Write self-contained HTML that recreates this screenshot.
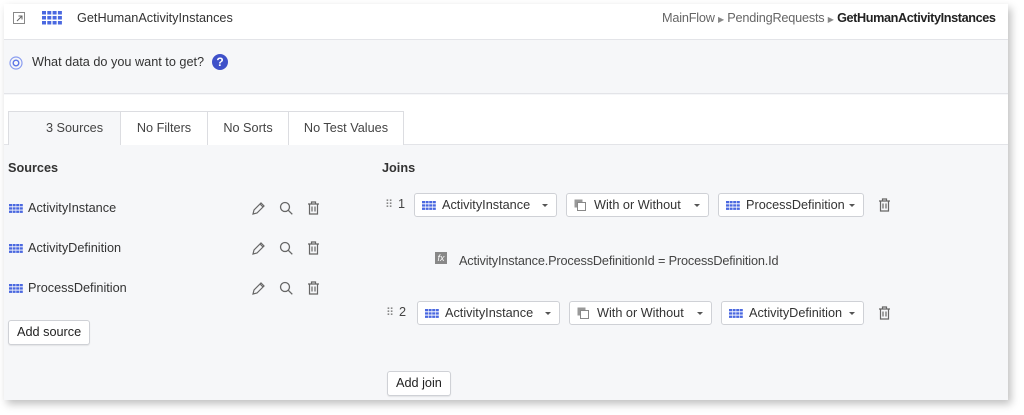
<!DOCTYPE html>
<html><head><meta charset="utf-8"><style>
*{box-sizing:border-box;margin:0;padding:0}
body{width:1024px;height:415px;background:#fff;font-family:"Liberation Sans",sans-serif;font-size:12.7px;color:#333;position:relative;overflow:hidden}
.panel{position:absolute;left:4px;top:4px;width:1004px;height:396px;background:#f6f7f9;box-shadow:3px 4px 8px rgba(0,0,0,.25);overflow:hidden}
.a{position:absolute;white-space:nowrap}
.hdr{position:absolute;left:0;top:0;width:1004px;height:36px;background:#fff;border-bottom:1px solid #e3e4e8}
.q{position:absolute;left:0;top:37px;width:1004px;height:53px;background:#f6f7f9;border-bottom:1px solid #e3e4e8}
.tabs{position:absolute;left:0;top:91px;width:1004px;height:50px;background:#fff;border-bottom:1px solid #e3e4e8}
.tab{position:absolute;top:16px;height:34px;border:1px solid #dcdde1;border-bottom:none;background:#fff;line-height:32px;text-align:center;color:#444}
.dd{position:absolute;height:24px;border:1px solid #cfd1d6;border-radius:3px;background:#fff;line-height:22px;color:#333}
.dd .c{position:absolute;right:8px;top:10px;width:0;height:0;border-left:3px solid transparent;border-right:3px solid transparent;border-top:3px solid #555}
.btn{position:absolute;height:25px;border:1px solid #cfd1d6;border-radius:3px;background:#fff;line-height:23px;padding:0 8px;color:#222;box-shadow:0 1px 1px rgba(0,0,0,.08)}
svg{position:absolute}
</style></head><body>
<svg width="0" height="0" style="position:absolute"><defs>
<g id="grid"><rect x="0" y="0" width="3" height="2.3" fill="#4a68e0"/><rect x="3.6" y="0" width="3" height="2.3" fill="#4a68e0"/><rect x="7.2" y="0" width="3" height="2.3" fill="#4a68e0"/><rect x="10.8" y="0" width="3" height="2.3" fill="#4a68e0"/>
<rect x="0" y="3.3" width="3" height="2.3" fill="#4a68e0"/><rect x="3.6" y="3.3" width="3" height="2.3" fill="#4a68e0"/><rect x="7.2" y="3.3" width="3" height="2.3" fill="#4a68e0"/><rect x="10.8" y="3.3" width="3" height="2.3" fill="#4a68e0"/>
<rect x="0" y="6.6" width="3" height="2.3" fill="#4a68e0"/><rect x="3.6" y="6.6" width="3" height="2.3" fill="#4a68e0"/><rect x="7.2" y="6.6" width="3" height="2.3" fill="#4a68e0"/><rect x="10.8" y="6.6" width="3" height="2.3" fill="#4a68e0"/></g>
<g id="big"><rect x="0" y="0" width="4" height="3.5" fill="#4a68e0"/><rect x="5.3" y="0" width="4" height="3.5" fill="#4a68e0"/><rect x="10.6" y="0" width="4" height="3.5" fill="#4a68e0"/><rect x="15.9" y="0" width="4" height="3.5" fill="#4a68e0"/>
<rect x="0" y="5" width="4" height="3.5" fill="#4a68e0"/><rect x="5.3" y="5" width="4" height="3.5" fill="#4a68e0"/><rect x="10.6" y="5" width="4" height="3.5" fill="#4a68e0"/><rect x="15.9" y="5" width="4" height="3.5" fill="#4a68e0"/>
<rect x="0" y="10" width="4" height="3.5" fill="#4a68e0"/><rect x="5.3" y="10" width="4" height="3.5" fill="#4a68e0"/><rect x="10.6" y="10" width="4" height="3.5" fill="#4a68e0"/><rect x="15.9" y="10" width="4" height="3.5" fill="#4a68e0"/></g>
<g id="trash" fill="none" stroke="#666" stroke-width="1.2"><path d="M1 3h11M4.5 3V1h4v2M2.5 3v10h8V3M5 5.5v5M8 5.5v5"/></g>
<g id="pen" fill="none" stroke="#666" stroke-width="1.2"><path d="M2 13l1-4 7-7 3 3-7 7z M9 3l3 3"/></g>
<g id="mag" fill="none" stroke="#666" stroke-width="1.3"><circle cx="6" cy="6" r="4.5"/><path d="M9.3 9.3l4 4"/></g>
</defs></svg>
<div class="panel">
 <div class="hdr">
  <div class="a" style="left:9px;top:8px;width:12px;height:12px;border:1px solid #888"></div>
  <svg style="left:12px;top:11px" width="7" height="7"><path d="M1 6L6 1M2.5 1H6v3.5" stroke="#666" fill="none"/></svg>
  <svg style="left:38px;top:7px" width="21" height="14"><use href="#big"/></svg>
  <div class="a" style="left:73px;top:7px;color:#333">GetHumanActivityInstances</div>
  <div class="a" style="left:658px;top:7px;color:#666;letter-spacing:-0.2px">MainFlow <span style="font-size:8px;color:#888">▶</span> PendingRequests <span style="font-size:8px;color:#888">▶</span> <span style="color:#222;font-weight:bold;letter-spacing:-0.4px">GetHumanActivityInstances</span></div>
 </div>
 <div class="q">
  <svg style="left:5px;top:15px" width="14" height="14"><circle cx="7" cy="7" r="6" fill="none" stroke="#8a9df0" stroke-width="1.2"/><circle cx="7" cy="7" r="2.8" fill="none" stroke="#5b74e6" stroke-width="1.4"/></svg>
  <div class="a" style="left:28px;top:14px;color:#333">What data do you want to get?</div>
  <div class="a" style="left:208px;top:13px;width:16px;height:16px;border-radius:50%;background:#3f51c9;color:#fff;font-weight:bold;font-size:12px;text-align:center;line-height:16px">?</div>
 </div>
 <div class="tabs">
  <div class="tab" style="left:4px;width:113px;background:#f6f7f9;padding-left:20px">3 Sources</div>
  <div class="tab" style="left:116px;width:88px">No Filters</div>
  <div class="tab" style="left:203px;width:82px">No Sorts</div>
  <div class="tab" style="left:284px;width:116px">No Test Values</div>
 </div>
 <div class="a" style="left:4px;top:157px;font-weight:bold;color:#333">Sources</div>
 <div class="a" style="left:378px;top:157px;font-weight:bold;color:#333">Joins</div>

 <svg style="left:5px;top:200px" width="14" height="10"><use href="#grid"/></svg>
 <div class="a" style="left:24px;top:197px">ActivityInstance</div>
 <svg style="left:5px;top:240px" width="14" height="10"><use href="#grid"/></svg>
 <div class="a" style="left:24px;top:237px">ActivityDefinition</div>
 <svg style="left:5px;top:280px" width="14" height="10"><use href="#grid"/></svg>
 <div class="a" style="left:24px;top:277px">ProcessDefinition</div>
 <svg style="left:247px;top:197px" width="15" height="15"><use href="#pen"/></svg>
 <svg style="left:275px;top:197px" width="15" height="15"><use href="#mag"/></svg>
 <svg style="left:303px;top:197px" width="14" height="15"><use href="#trash"/></svg>
 <svg style="left:247px;top:237px" width="15" height="15"><use href="#pen"/></svg>
 <svg style="left:275px;top:237px" width="15" height="15"><use href="#mag"/></svg>
 <svg style="left:303px;top:237px" width="14" height="15"><use href="#trash"/></svg>
 <svg style="left:247px;top:277px" width="15" height="15"><use href="#pen"/></svg>
 <svg style="left:275px;top:277px" width="15" height="15"><use href="#mag"/></svg>
 <svg style="left:303px;top:277px" width="14" height="15"><use href="#trash"/></svg>
 <div class="btn" style="left:4px;top:316px">Add source</div>

 <div class="a" style="left:381px;top:194px;color:#888;font-size:11px;letter-spacing:-1px">⠿</div>
 <div class="a" style="left:394px;top:193px;color:#444">1</div>
 <div class="dd" style="left:410px;top:189px;width:143px"><svg style="left:7px;top:7px" width="14" height="10"><use href="#grid"/></svg><span style="position:absolute;left:27px">ActivityInstance</span><i class="c"></i></div>
 <div class="dd" style="left:562px;top:189px;width:143px"><svg style="left:7px;top:5px" width="13" height="12"><rect x="0.5" y="0.5" width="8" height="8" fill="#999"/><rect x="3.5" y="3.5" width="8" height="8" fill="#fff" stroke="#888"/></svg><span style="position:absolute;left:27px">With or Without</span><i class="c"></i></div>
 <div class="dd" style="left:714px;top:189px;width:146px"><svg style="left:7px;top:7px" width="14" height="10"><use href="#grid"/></svg><span style="position:absolute;left:27px">ProcessDefinition</span><i class="c"></i></div>
 <svg style="left:874px;top:194px" width="14" height="15"><use href="#trash"/></svg>

 <div class="a" style="left:431px;top:248px;width:12px;height:12px;background:#888;color:#fff;font-size:9px;font-style:italic;line-height:12px;text-align:center">fx</div>
 <div class="a" style="left:455px;top:250px;color:#444;letter-spacing:-0.15px">ActivityInstance.ProcessDefinitionId = ProcessDefinition.Id</div>

 <div class="a" style="left:382px;top:302px;color:#888;font-size:11px;letter-spacing:-1px">⠿</div>
 <div class="a" style="left:395px;top:301px;color:#444">2</div>
 <div class="dd" style="left:413px;top:297px;width:143px"><svg style="left:7px;top:7px" width="14" height="10"><use href="#grid"/></svg><span style="position:absolute;left:27px">ActivityInstance</span><i class="c"></i></div>
 <div class="dd" style="left:565px;top:297px;width:143px"><svg style="left:7px;top:5px" width="13" height="12"><rect x="0.5" y="0.5" width="8" height="8" fill="#999"/><rect x="3.5" y="3.5" width="8" height="8" fill="#fff" stroke="#888"/></svg><span style="position:absolute;left:27px">With or Without</span><i class="c"></i></div>
 <div class="dd" style="left:717px;top:297px;width:143px"><svg style="left:7px;top:7px" width="14" height="10"><use href="#grid"/></svg><span style="position:absolute;left:27px">ActivityDefinition</span><i class="c"></i></div>
 <svg style="left:874px;top:302px" width="14" height="15"><use href="#trash"/></svg>

 <div class="btn" style="left:383px;top:367px">Add join</div>
</div>
</body></html>
